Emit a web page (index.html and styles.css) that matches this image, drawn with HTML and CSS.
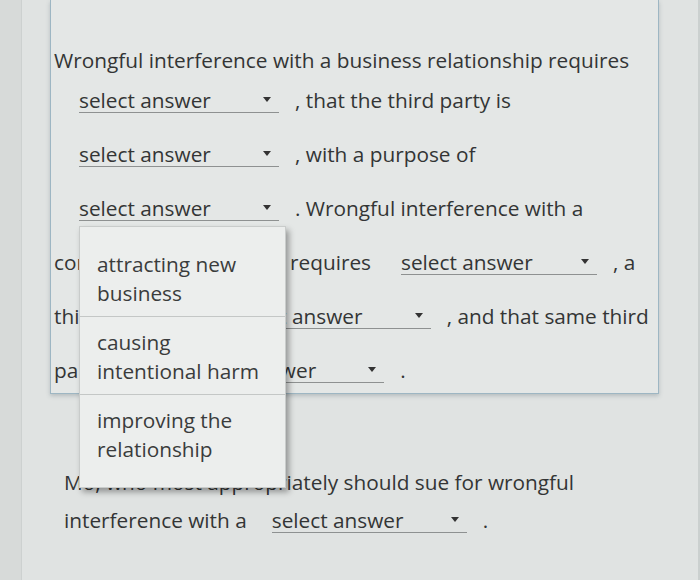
FILE: index.html
```html
<!DOCTYPE html>
<html lang="en">
<head>
    <meta charset="UTF-8">
    <meta name="viewport" content="width=device-width, initial-scale=1.0">
    <title>Wrongful Interference</title>
    <link rel="stylesheet" href="styles.css">
</head>
<body>
    <div class="page">
        <div class="rail"></div>

        <main class="content">
            <div class="card">
                <div class="line">Wrongful interference with a business relationship requires</div>

                <div class="line">
                    <div class="pick"><span>select answer</span><i class="caret"></i></div>
                    <span>, that the third party is</span>
                </div>

                <div class="line gap">
                    <div class="pick"><span>select answer</span><i class="caret"></i></div>
                    <span>, with a purpose of</span>
                </div>

                <div class="line gap">
                    <div class="pick open">
                        <span>select answer</span><i class="caret"></i>
                        <!-- open dropdown -->
                        <ul class="menu">
                            <li>attracting new business</li>
                            <li>causing intentional harm</li>
                            <li>improving the relationship</li>
                        </ul>
                    </div>
                    <span>. Wrongful interference with a</span>
                </div>

                <div class="line gap">
                    <span>contractual relationship requires</span>
                    <div class="pick wide"><span>select answer</span><i class="caret"></i></div>
                    <span>, a</span>
                </div>

                <div class="line gap">
                    <span>third party was</span>
                    <div class="pick push"><span>select answer</span><i class="caret"></i></div>
                    <span>, and that same third</span>
                </div>

                <div class="line gap">
                    <span>party must</span>
                    <div class="pick"><span>select answer</span><i class="caret"></i></div>
                    <span>.</span>
                </div>
            </div>

            <div class="after">
                <div class="line">Mo, who most appropriately should sue for wrongful</div>
                <div class="line">
                    <span>interference with a</span>
                    <div class="pick short"><span>select answer</span><i class="caret"></i></div>
                    <span>.</span>
                </div>
            </div>
        </main>

        <div class="edge"></div>
    </div>
</body>
</html>
```

FILE: styles.css
```css
body {
    margin: 0;
    padding: 0;
    font-family: 'Open Sans', 'Noto Sans', sans-serif;
    font-size: 20.8px;
    color: #333535;
    background-color: #dfe2e1;
}

.page {
    display: flex;
    width: 700px;
    height: 580px;
    overflow: hidden;
}

.rail {
    width: 21px;
    background-color: #d7dad9;
    border-right: 1px solid #cdd1d0;
}

.content {
    flex: 1;
    background-color: #e0e3e2;
}

.edge {
    width: 2px;
    background-color: #cbd0cf;
}

.card {
    margin-left: 28px;
    width: 604px;
    padding: 40px 0 3px 3px;
    background-color: #e4e7e6;
    border: 1px solid #9db6c3;
    border-top: none;
    box-shadow: 0 2px 4px rgba(60, 80, 90, 0.25);
}

.line {
    display: flex;
    align-items: center;
    height: 40px;
    white-space: nowrap;
}

.line.gap {
    margin-top: 14px;
}

/* fake select boxes */
.pick {
    position: relative;
    display: flex;
    align-items: center;
    justify-content: space-between;
    width: 200px;
    height: 26px;
    margin: 0 16px 0 25px;
    padding-right: 8px;
    box-sizing: border-box;
    border-bottom: 1px solid #8e9191;
}

.pick.wide {
    margin-left: 30px;
    width: 196px;
}

.pick.push {
    margin-left: 31px;
}

.pick.short {
    width: 195px;
}

.caret {
    width: 0;
    height: 0;
    border-left: 4px solid transparent;
    border-right: 4px solid transparent;
    border-top: 5px solid #333;
}

.menu {
    position: absolute;
    top: calc(100% + 6px);
    left: 0;
    width: 205px;
    margin: 0;
    padding: 12px 0 15px;
    list-style: none;
    background-color: #eceeed;
    border: 1px solid #c9cccb;
    box-shadow: 3px 4px 6px rgba(0, 0, 0, 0.35);
    white-space: normal;
    z-index: 10;
}

.menu li {
    padding: 11px 17px 8px;
    line-height: 29px;
    color: #3a3c3c;
    border-bottom: 1px solid #c4c7c6;
}

.menu li:last-child {
    border-bottom: none;
}

.after {
    padding: 69px 0 0 42px;
}

.after .line {
    height: 38px;
}
```
